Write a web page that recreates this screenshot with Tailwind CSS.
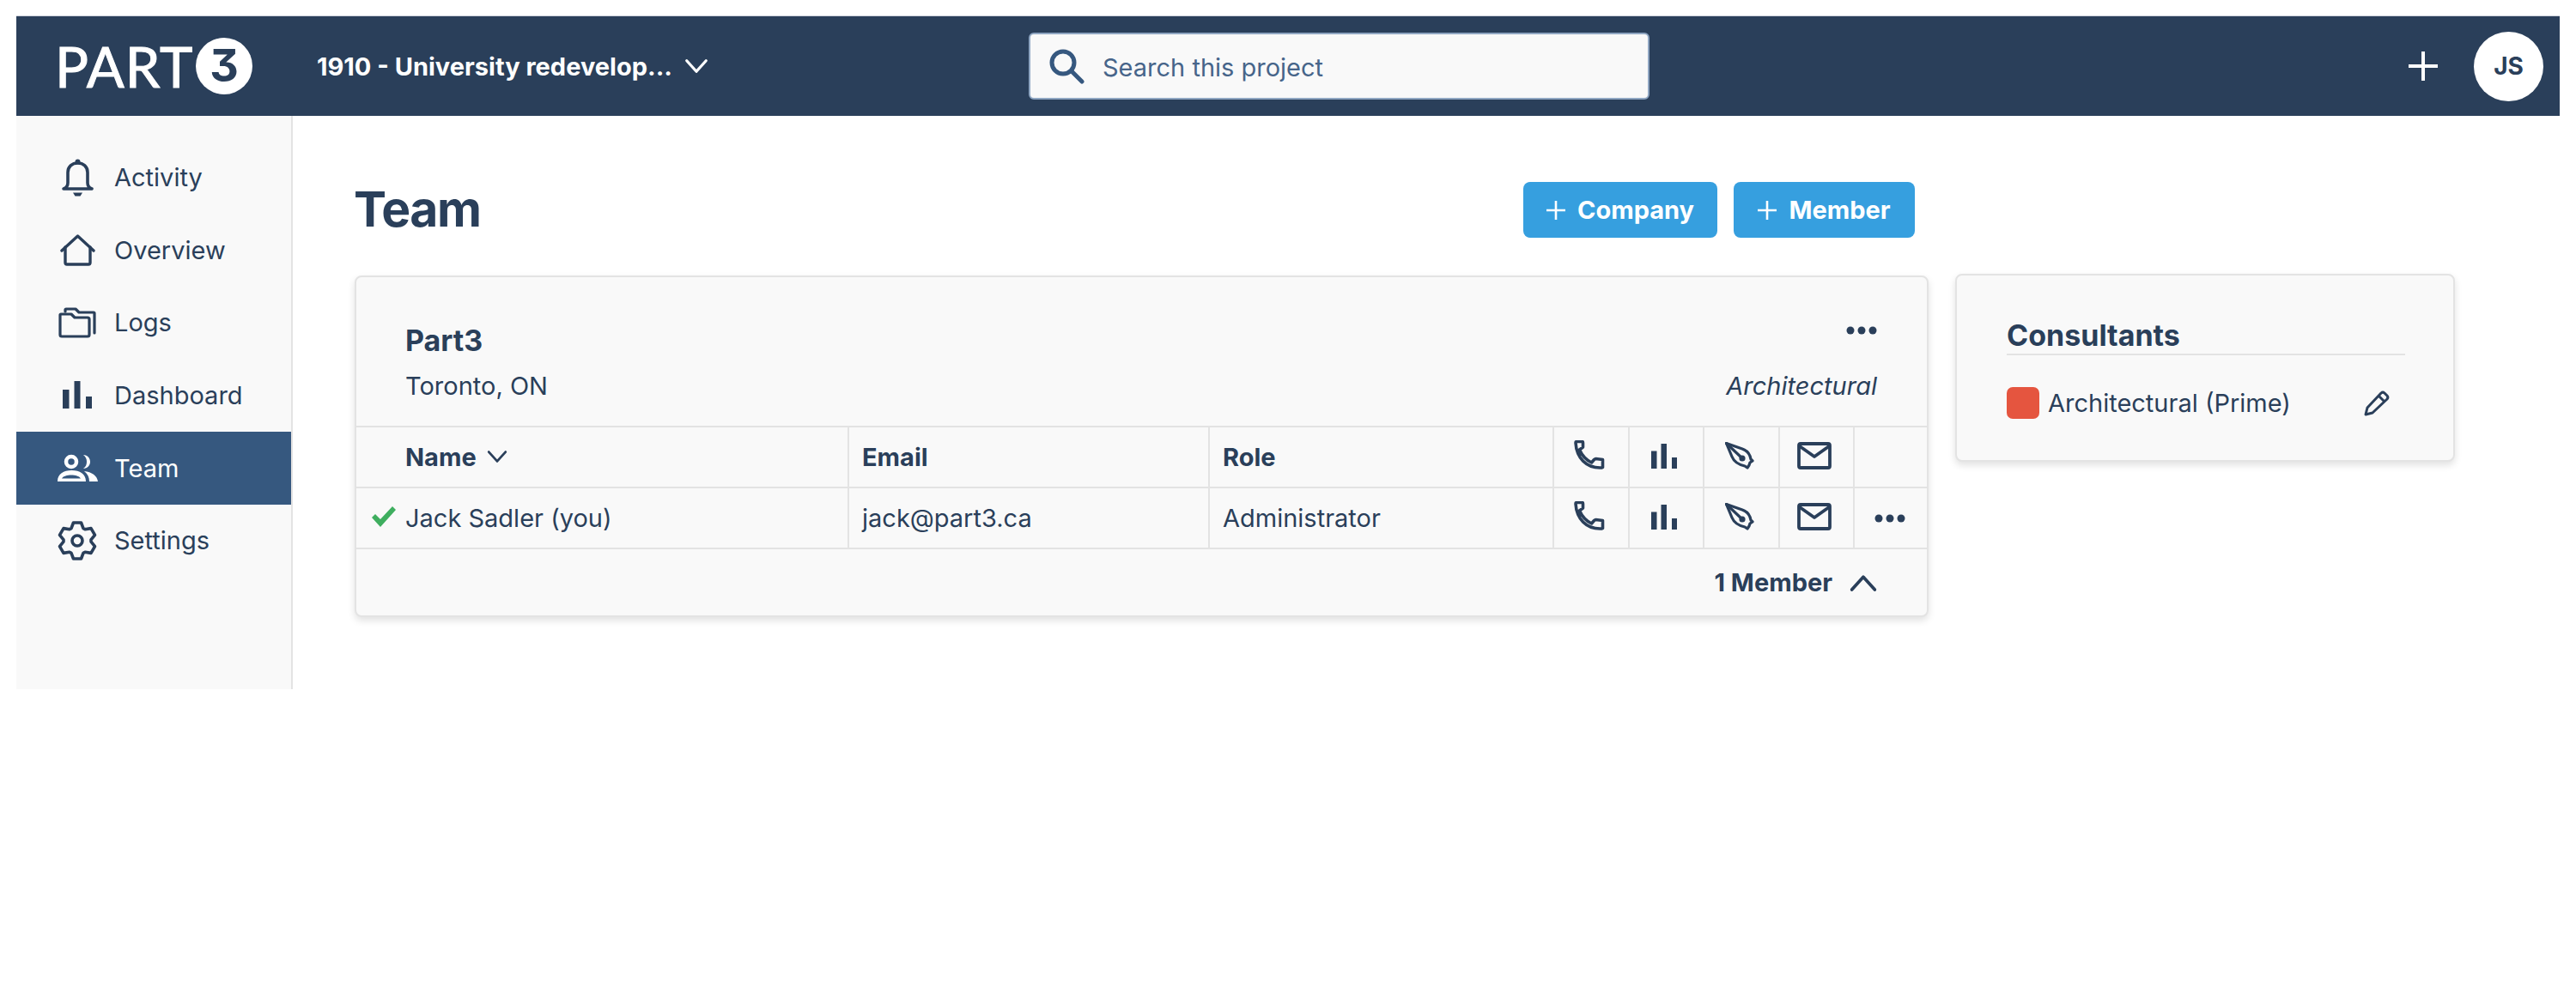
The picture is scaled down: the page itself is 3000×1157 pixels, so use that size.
<!DOCTYPE html>
<html lang="en">
<head>
  <meta charset="UTF-8">
  <title>Team</title>
  <script src="https://cdn.jsdelivr.net/npm/@tailwindcss/browser@4"></script>
</head>
<body class="bg-white font-['Inter',sans-serif] text-[#2a3f5a] text-[29px] leading-none">
  <div class="mx-[19px] mt-[18px]">
    <!-- Header -->
    <header class="h-[117px] bg-[#2a3f5a] border-t border-[#cfd3dc] flex items-center text-white">
      <div class="w-[350px] pl-[48px] flex items-center shrink-0">
        <span class="font-['Lato',sans-serif] text-[65px] leading-none w-[163px] -ml-[3px] tracking-[1px] [-webkit-text-stroke:1px_white]">PART</span>
        <span class="w-[66px] h-[66px] rounded-full bg-white text-[#2a3f5a] flex items-center justify-center text-[52px] font-bold [font-feature-settings:'cv09'] -mt-[1px] ml-[1px]">3</span>
      </div>
      <div class="w-[829px] flex items-center shrink-0">
        <span class="font-bold text-[29px]">1910 - University redevelop...</span>
        <svg class="w-[30px] h-[30px] ml-[13px]" viewBox="0 0 24 24" fill="none" stroke="currentColor" stroke-width="2.6" stroke-linecap="round" stroke-linejoin="round"><path d="M3 7l9 10 9-10"/></svg>
      </div>
      <div class="w-[723px] h-[78px] rounded-[6px] bg-[#f9f9f9] border-2 border-[#8fa6c2] flex items-center pl-[21px] shrink-0">
        <svg class="w-[42px] h-[42px] text-[#36587f]" viewBox="0 0 42 42" fill="none" stroke="currentColor" stroke-width="5" stroke-linecap="round"><circle cx="17" cy="17" r="13"/><path d="M27 27l12 12"/></svg>
        <span class="ml-[21px] mt-[2px] text-[#47658a]">Search this project</span>
      </div>
      <div class="flex-1 flex items-center justify-end pr-[19px]">
        <svg class="w-[36px] h-[36px] mr-[41px]" viewBox="0 0 36 36" fill="none" stroke="currentColor" stroke-width="4"><path d="M18 1v34M1 18h34"/></svg>
        <span class="w-[81px] h-[81px] rounded-full bg-white text-[#2a3f5a] flex items-center justify-center font-bold text-[28px]">JS</span>
      </div>
    </header>

    <div class="flex">
      <!-- Sidebar -->
      <nav class="w-[322px] h-[668px] shrink-0 bg-[#f9f9f9] border-r-2 border-[#e3e3e3] pt-[29px]">
        <a class="h-[85px] flex items-center pl-[48px] gap-[20px]">
          <span class="w-[46px] flex justify-center"><svg class="w-[37px] h-[44px] shrink-0" viewBox="0 0 37 44" fill="none" stroke="currentColor" stroke-width="3.6" stroke-linejoin="round"><path d="M2 35c3-1 5-3 5-7V16C7 9 12 5 18.5 5S30 9 30 16v12c0 4 2 6 5 7z"/><circle cx="18.5" cy="3.5" r="3" fill="currentColor" stroke="none"/><path d="M13 39.5h11l-2.5 4h-6z" fill="currentColor" stroke="none"/></svg></span>
          <span>Activity</span>
        </a>
        <a class="h-[84.5px] flex items-center pl-[48px] gap-[20px]">
          <span class="w-[46px] flex justify-center"><svg class="w-[41px] h-[37px] shrink-0" viewBox="0 0 41 37" fill="none" stroke="currentColor" stroke-width="3.4" stroke-linejoin="round" stroke-linecap="round"><path d="M2 19L20.5 2 39 19"/><path d="M6 15v18a2 2 0 002 2h25a2 2 0 002-2V15"/></svg></span>
          <span>Overview</span>
        </a>
        <a class="h-[84.5px] flex items-center pl-[48px] gap-[20px]">
          <span class="w-[46px] flex justify-center"><svg class="w-[44px] h-[36px] shrink-0" viewBox="0 0 44 36" fill="none" stroke="currentColor" stroke-width="3.2" stroke-linejoin="round" stroke-linecap="round"><path d="M2 9a1 1 0 011-1h12l4 4h15a2 2 0 012 2v18a2 2 0 01-2 2H4a2 2 0 01-2-2z"/><path d="M8 5V3a1 1 0 011-1h11l4 4h17a1 1 0 011 1v23"/></svg></span>
          <span>Logs</span>
        </a>
        <a class="h-[84.5px] flex items-center pl-[48px] gap-[20px]">
          <span class="w-[46px] flex justify-center"><svg class="w-[34px] h-[32px] shrink-0" viewBox="0 0 34 32" fill="currentColor"><rect x="0" y="10" width="7.5" height="22"/><rect x="13.5" y="0" width="7" height="32"/><rect x="27" y="18" width="7" height="14"/></svg></span>
          <span>Dashboard</span>
        </a>
        <a class="h-[85px] flex items-center pl-[48px] gap-[20px] bg-[#36587f] text-white">
          <span class="w-[46px] flex justify-center"><svg class="w-[47px] h-[33px] shrink-0" viewBox="0 0 47 33" fill="currentColor"><circle cx="16" cy="9" r="6" fill="none" stroke="currentColor" stroke-width="4.5"/><path d="M30 1c5 0 8 4 8 8s-3 8-8 8c3-2 4-5 4-8s-1-6-4-8z"/><path fill-rule="evenodd" d="M0 32c0-9 7-13 16.5-13S33 23 33 32zM5 28.500c2-3 6-4 11-4s9 1 11 4z"/><path d="M31 20c9 1 15 5 16 12H37c0-5-2-9-6-12z"/></svg></span>
          <span>Team</span>
        </a>
        <a class="h-[84.5px] flex items-center pl-[48px] gap-[20px]">
          <span class="w-[46px] flex justify-center"><svg class="w-[46px] h-[46px] shrink-0" viewBox="0 0 46 46" fill="none" stroke="currentColor" stroke-width="3.6" stroke-linejoin="round"><path d="M16 8.600L18.500 2h9L30 8.600l2 1.100 7-1.100 4.500 7.800L39 21.900v2.200l4.500 5.500L39 37.400l-7-1.100-2 1.100L27.500 44h-9L16 37.400l-2-1.100-7 1.100-4.500-7.800L7 24.100v-2.200l-4.500-5.500L7 8.600l7 1.100z"/><circle cx="23" cy="23" r="6"/></svg></span>
          <span>Settings</span>
        </a>
      </nav>

      <!-- Main -->
      <main class="flex-1 pl-[72px] pt-[77px]">
        <div class="w-[1817px] h-[65px] flex items-center">
          <h1 class="text-[57px] font-bold tracking-tight -mt-[3px] -ml-[1px]">Team</h1>
          <div class="ml-auto flex gap-[19px]">
            <button class="w-[226px] h-[65px] rounded-[8px] bg-[#369fdf] text-white font-bold flex items-center justify-center gap-[14px]">
              <svg class="w-[22px] h-[22px]" viewBox="0 0 22 22" fill="none" stroke="currentColor" stroke-width="2.6"><path d="M11 0v22M0 11h22"/></svg>Company
            </button>
            <button class="w-[211px] h-[65px] rounded-[8px] bg-[#369fdf] text-white font-bold flex items-center justify-center gap-[14px]">
              <svg class="w-[22px] h-[22px]" viewBox="0 0 22 22" fill="none" stroke="currentColor" stroke-width="2.6"><path d="M11 0v22M0 11h22"/></svg>Member
            </button>
          </div>
        </div>

        <div class="flex items-start gap-[31px] mt-[42px]">
          <!-- Company card -->
          <section class="w-[1833px] h-[398px] mt-[2px] rounded-[8px] bg-[#f9f9f9] border-2 border-[#e3e3e3] shadow-[0_4px_8px_rgba(0,0,0,0.12)] shrink-0 flex flex-col overflow-hidden">
            <div class="h-[173px] pl-[57px] pr-[58px] pt-[43px] relative">
              <div class="flex justify-between items-start h-[64px]">
                <h2 class="font-bold text-[34px] mt-[14px]">Part3</h2>
                <svg class="w-[36px] h-[12px] mt-[13px]" viewBox="0 0 36 12" fill="currentColor"><circle cx="5" cy="6" r="4.5"/><circle cx="18" cy="6" r="4.5"/><circle cx="31" cy="6" r="4.5"/></svg>
              </div>
              <div class="flex justify-between mt-[5px]">
                <span>Toronto, ON</span>
                <span class="italic">Architectural</span>
              </div>
            </div>
            <!-- header row -->
            <div class="grid grid-cols-[574px_420px_401px_88px_87px_88px_87px_1fr] h-[71px] border-t-2 border-[#e3e3e3] font-bold">
              <div class="flex items-center pl-[57px] border-r-2 border-[#e3e3e3]">Name
                <svg class="w-[26px] h-[26px] ml-[11px] -mt-[2px]" viewBox="0 0 24 24" fill="none" stroke="currentColor" stroke-width="2.6" stroke-linecap="round" stroke-linejoin="round"><path d="M3 7l9 10 9-10"/></svg>
              </div>
              <div class="flex items-center pl-[15px] border-r-2 border-[#e3e3e3]">Email</div>
              <div class="flex items-center pl-[15px] border-r-2 border-[#e3e3e3]">Role</div>
              <div class="flex items-center justify-center border-r-2 border-[#e3e3e3] pb-[3px] pr-[5px]">
                <svg class="w-[36px] h-[36px]" viewBox="0 0 36 36" fill="none" stroke="currentColor" stroke-width="3.6" stroke-linejoin="round"><path d="M2 3q0-1.500 1.500-1.500h6q1 0 1 1.500v5l-4 3c3 7 8 12 14 15l3-3.500q1-1 2-1l8 1v9l-1 .5C14 33 3 20 2 3z"/></svg>
              </div>
              <div class="flex items-center justify-center border-r-2 border-[#e3e3e3] pb-[3px] pr-[5px]">
                <svg class="w-[30px] h-[29px]" viewBox="0 0 30 29" fill="currentColor"><rect x="0" y="8.500" width="6.500" height="20.500"/><rect x="11.500" y="0" width="6.500" height="29"/><rect x="24" y="16" width="6" height="13"/></svg>
              </div>
              <div class="flex items-center justify-center border-r-2 border-[#e3e3e3] pb-[1px] pr-[5px]">
                <svg class="w-[34px] h-[34px]" viewBox="0 0 34 34" fill="none" stroke="currentColor" stroke-width="3.2" stroke-linejoin="round" stroke-linecap="round"><path d="M1.500 1.500L20 8c6 2 9 6 10 12l2 2-3 2-1 3-2 3-3-2C14 26 10 22 8 17z"/><path d="M1.500 1.500L20 19"/><circle cx="20" cy="19" r="2" fill="currentColor"/></svg>
              </div>
              <div class="flex items-center justify-center border-r-2 border-[#e3e3e3] pb-[3px] pr-[5px]">
                <svg class="w-[40px] h-[32px]" viewBox="0 0 40 32" fill="none" stroke="currentColor" stroke-width="3.8" stroke-linejoin="round" stroke-linecap="round"><rect x="2" y="2" width="36" height="28" rx="2"/><path d="M3 5l17 12L37 5"/></svg>
              </div>
              <div></div>
            </div>
            <!-- member row -->
            <div class="grid grid-cols-[574px_420px_401px_88px_87px_88px_87px_1fr] h-[71px] border-t-2 border-[#e3e3e3]">
              <div class="flex items-center pl-[18px] border-r-2 border-[#e3e3e3]">
                <svg class="w-[28px] h-[24px] mr-[11px] -mt-[4px]" viewBox="0 0 28 24" fill="#3fae5f"><path d="M0 13l4-4 6 6L24 0l4 4-18 20z"/></svg>Jack Sadler (you)
              </div>
              <div class="flex items-center pl-[15px] border-r-2 border-[#e3e3e3]">jack@part3.ca</div>
              <div class="flex items-center pl-[15px] border-r-2 border-[#e3e3e3]">Administrator</div>
              <div class="flex items-center justify-center border-r-2 border-[#e3e3e3] pb-[3px] pr-[5px]">
                <svg class="w-[36px] h-[36px]" viewBox="0 0 36 36" fill="none" stroke="currentColor" stroke-width="3.6" stroke-linejoin="round"><path d="M2 3q0-1.500 1.500-1.500h6q1 0 1 1.500v5l-4 3c3 7 8 12 14 15l3-3.500q1-1 2-1l8 1v9l-1 .5C14 33 3 20 2 3z"/></svg>
              </div>
              <div class="flex items-center justify-center border-r-2 border-[#e3e3e3] pb-[3px] pr-[5px]">
                <svg class="w-[30px] h-[29px]" viewBox="0 0 30 29" fill="currentColor"><rect x="0" y="8.500" width="6.500" height="20.500"/><rect x="11.500" y="0" width="6.500" height="29"/><rect x="24" y="16" width="6" height="13"/></svg>
              </div>
              <div class="flex items-center justify-center border-r-2 border-[#e3e3e3] pb-[1px] pr-[5px]">
                <svg class="w-[34px] h-[34px]" viewBox="0 0 34 34" fill="none" stroke="currentColor" stroke-width="3.2" stroke-linejoin="round" stroke-linecap="round"><path d="M1.500 1.500L20 8c6 2 9 6 10 12l2 2-3 2-1 3-2 3-3-2C14 26 10 22 8 17z"/><path d="M1.500 1.500L20 19"/><circle cx="20" cy="19" r="2" fill="currentColor"/></svg>
              </div>
              <div class="flex items-center justify-center border-r-2 border-[#e3e3e3] pb-[3px] pr-[5px]">
                <svg class="w-[40px] h-[32px]" viewBox="0 0 40 32" fill="none" stroke="currentColor" stroke-width="3.8" stroke-linejoin="round" stroke-linecap="round"><rect x="2" y="2" width="36" height="28" rx="2"/><path d="M3 5l17 12L37 5"/></svg>
              </div>
              <div class="flex items-center justify-center pr-[3px]">
                <svg class="w-[36px] h-[12px]" viewBox="0 0 36 12" fill="currentColor"><circle cx="5" cy="6" r="4.5"/><circle cx="18" cy="6" r="4.5"/><circle cx="31" cy="6" r="4.5"/></svg>
              </div>
            </div>
            <!-- footer -->
            <div class="flex-1 border-t-2 border-[#e3e3e3] flex items-center justify-end pr-[58px] font-bold">
              1 Member
              <svg class="w-[32px] h-[32px] ml-[20px]" viewBox="0 0 24 24" fill="none" stroke="currentColor" stroke-width="2.8" stroke-linecap="round" stroke-linejoin="round"><path d="M2 18L12 7l10 11"/></svg>
            </div>
          </section>

          <!-- Consultants card -->
          <aside class="w-[582px] h-[219px] rounded-[8px] bg-[#f9f9f9] border-2 border-[#e3e3e3] shadow-[0_4px_8px_rgba(0,0,0,0.12)] pl-[58px] pr-[56px] pt-[53px] shrink-0">
            <h2 class="font-bold text-[34px] pb-[4px] border-b-2 border-[#e3e3e3]">Consultants</h2>
            <div class="flex items-center mt-[37px] h-[37px]">
              <span class="w-[38px] h-[37px] rounded-[7px] bg-[#e5553f] shrink-0"></span>
              <span class="ml-[10px]">Architectural (Prime)</span>
              <svg class="w-[32px] h-[32px] ml-auto mr-[17px]" viewBox="0 0 32 32" fill="none" stroke="currentColor" stroke-width="3" stroke-linejoin="round"><path d="M3 29l2-8L21 4a3 3 0 014 0l3 3a3 3 0 010 4L11 27z"/><path d="M18 7l7 7"/></svg>
            </div>
          </aside>
        </div>
      </main>
    </div>
  </div>
</body>
</html>
